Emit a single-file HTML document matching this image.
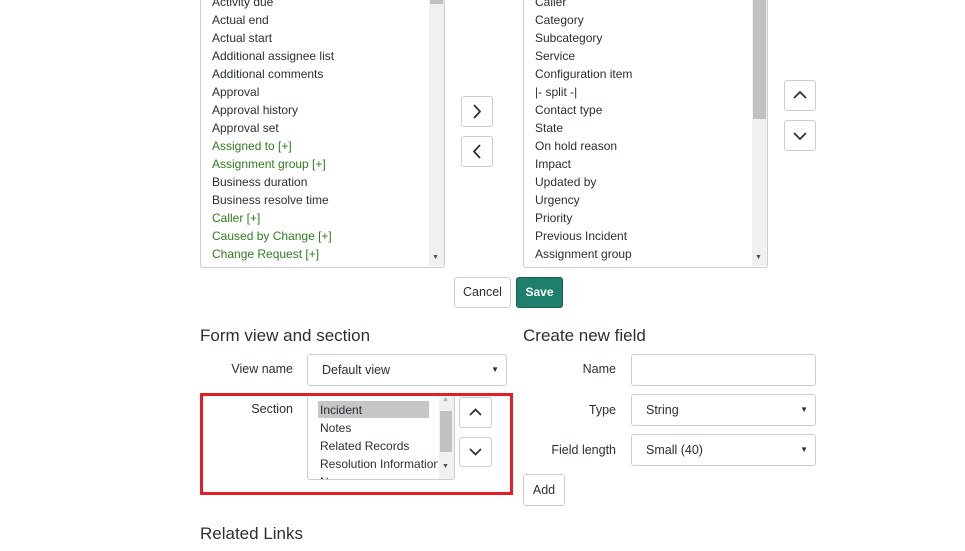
<!DOCTYPE html>
<html><head><meta charset="utf-8"><style>
*{box-sizing:border-box;margin:0;padding:0}
body{width:965px;height:551px;overflow:hidden;background:#fff;font-family:"Liberation Sans",sans-serif;color:#2b2f33;position:relative;font-size:12px}
.a{position:absolute}
.list{position:absolute;border:1px solid #cdcdcd;border-top:none;border-radius:0 0 3px 3px;overflow:hidden;background:#fff}
.it{position:absolute;white-space:nowrap;line-height:18px;height:18px}
.g{color:#2f7d1f}
.sb{position:absolute;background:#f0f0f0}
.th{position:absolute;background:#c1c1c1}
.btn{position:absolute;border:1px solid #cdcdcd;border-radius:3px;background:#fff}
.lbl{position:absolute;text-align:right;font-size:12.5px}
.sel{position:absolute;border:1px solid #cdcdcd;border-radius:3px;background:#fff;font-size:12.5px;padding-left:14px;line-height:30px}
.sel:after{content:"▼";position:absolute;right:7px;top:0;font-size:8px}
h2{position:absolute;font-weight:normal;font-size:17px;color:#2b2f33}
</style></head><body>

<div class="list" style="left:200px;top:-2px;width:245px;height:270px">
<div class="sb" style="left:228px;top:0;width:15px;height:268px"></div>
<div class="th" style="left:229px;top:0;width:13px;height:6px"></div>
<div class="a" style="left:231px;top:256px;font-size:7px;color:#505050">▼</div>
</div>
<div class="list" style="left:523px;top:-2px;width:245px;height:270px">
<div class="sb" style="left:228px;top:0;width:15px;height:268px"></div>
<div class="th" style="left:229px;top:0;width:13px;height:121px"></div>
<div class="a" style="left:231px;top:256px;font-size:7px;color:#505050">▼</div>
</div>

<div class="a" style="left:212px;top:-7px;width:214px;height:273px;overflow:hidden">
<div class="it" style="top:0">Activity due</div>
<div class="it" style="top:18px">Actual end</div>
<div class="it" style="top:36px">Actual start</div>
<div class="it" style="top:54px">Additional assignee list</div>
<div class="it" style="top:72px">Additional comments</div>
<div class="it" style="top:90px">Approval</div>
<div class="it" style="top:108px">Approval history</div>
<div class="it" style="top:126px">Approval set</div>
<div class="it g" style="top:144px">Assigned to [+]</div>
<div class="it g" style="top:162px">Assignment group [+]</div>
<div class="it" style="top:180px">Business duration</div>
<div class="it" style="top:198px">Business resolve time</div>
<div class="it g" style="top:216px">Caller [+]</div>
<div class="it g" style="top:234px">Caused by Change [+]</div>
<div class="it g" style="top:252px">Change Request [+]</div>
<div class="it" style="top:270px">Child Incidents</div>
</div>
<div class="a" style="left:535px;top:-7px;width:214px;height:273px;overflow:hidden">
<div class="it" style="top:0">Caller</div>
<div class="it" style="top:18px">Category</div>
<div class="it" style="top:36px">Subcategory</div>
<div class="it" style="top:54px">Service</div>
<div class="it" style="top:72px">Configuration item</div>
<div class="it" style="top:90px">|- split -|</div>
<div class="it" style="top:108px">Contact type</div>
<div class="it" style="top:126px">State</div>
<div class="it" style="top:144px">On hold reason</div>
<div class="it" style="top:162px">Impact</div>
<div class="it" style="top:180px">Updated by</div>
<div class="it" style="top:198px">Urgency</div>
<div class="it" style="top:216px">Priority</div>
<div class="it" style="top:234px">Previous Incident</div>
<div class="it" style="top:252px">Assignment group</div>
<div class="it" style="top:270px">Assigned to</div>
</div>

<div class="btn" style="left:461px;top:96px;width:32px;height:31px"><svg width="30" height="29" viewBox="0 0 30 29"><path d="M12 8 L18 14.5 L12 21" fill="none" stroke="#333" stroke-width="1.8"/></svg></div>
<div class="btn" style="left:461px;top:136px;width:32px;height:31px"><svg width="30" height="29" viewBox="0 0 30 29"><path d="M18 8 L12 14.5 L18 21" fill="none" stroke="#333" stroke-width="1.8"/></svg></div>
<div class="btn" style="left:784px;top:80px;width:32px;height:31px"><svg width="30" height="29" viewBox="0 0 30 29"><path d="M9 17 L15 11 L21 17" fill="none" stroke="#333" stroke-width="1.8"/></svg></div>
<div class="btn" style="left:784px;top:120px;width:32px;height:31px"><svg width="30" height="29" viewBox="0 0 30 29"><path d="M9 12 L15 18 L21 12" fill="none" stroke="#333" stroke-width="1.8"/></svg></div>

<div class="btn" style="left:454px;top:277px;width:57px;height:31px;text-align:center;line-height:29px;font-size:12.5px">Cancel</div>
<div class="a" style="left:516px;top:277px;width:47px;height:31px;background:#1f7f6d;border:1px solid #17604f;border-radius:3px;color:#fff;font-weight:bold;text-align:center;line-height:29px;font-size:12px">Save</div>

<h2 style="left:200px;top:326px">Form view and section</h2>
<h2 style="left:523px;top:326px">Create new field</h2>

<div class="lbl" style="left:200px;width:93px;top:362px">View name</div>
<div class="sel" style="left:307px;top:354px;width:200px;height:32px">Default view</div>

<div class="a" style="left:200px;top:393px;width:313px;height:102px;border:3px solid #e41e26"></div>
<div class="lbl" style="left:200px;width:93px;top:402px">Section</div>
<div class="a" style="left:307px;top:397px;width:148px;height:83px;border:1px solid #cdcdcd;border-top:none;border-radius:0 0 3px 3px;overflow:hidden">
<div class="a" style="left:10px;top:4px;width:111px;height:17px;background:#c6c6c6"></div>
<div class="a" style="left:12px;top:4px;line-height:18px;font-size:12px;white-space:nowrap;width:118px;overflow:hidden">Incident<br>Notes<br>Related Records<br>Resolution Information<br>New</div>
<div class="sb" style="left:131px;top:0;width:15px;height:82px"></div>
<div class="th" style="left:132px;top:14px;width:12px;height:41px"></div>
<div class="a" style="left:134px;top:-1px;font-size:7px;color:#aaa">▲</div>
<div class="a" style="left:134px;top:66px;font-size:7px;color:#505050">▼</div>
</div>
<div class="btn" style="left:459px;top:397px;width:33px;height:31px"><svg width="31" height="29" viewBox="0 0 31 29"><path d="M10 17 L15.5 11.5 L21 17" fill="none" stroke="#333" stroke-width="1.8"/></svg></div>
<div class="btn" style="left:459px;top:437px;width:33px;height:30px"><svg width="31" height="28" viewBox="0 0 31 28"><path d="M10 11 L15.5 16.5 L21 11" fill="none" stroke="#333" stroke-width="1.8"/></svg></div>

<div class="lbl" style="left:523px;width:93px;top:362px">Name</div>
<div class="btn" style="left:631px;top:354px;width:185px;height:32px"></div>
<div class="lbl" style="left:523px;width:93px;top:403px">Type</div>
<div class="sel" style="left:631px;top:394px;width:185px;height:32px">String</div>
<div class="lbl" style="left:523px;width:93px;top:443px">Field length</div>
<div class="sel" style="left:631px;top:434px;width:185px;height:32px">Small (40)</div>
<div class="btn" style="left:523px;top:474px;width:42px;height:32px;text-align:center;line-height:30px;font-size:12.5px">Add</div>

<h2 style="left:200px;top:524px">Related Links</h2>
</body></html>
